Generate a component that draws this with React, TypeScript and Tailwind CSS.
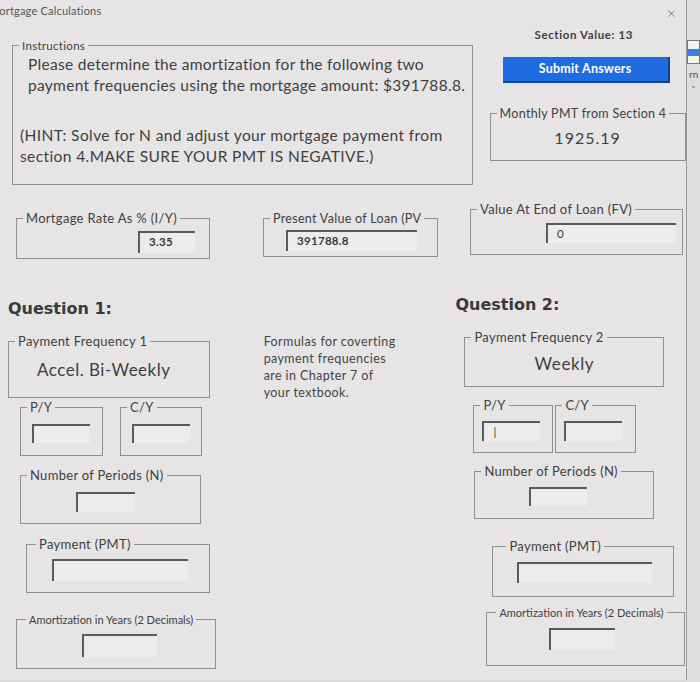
import React from "react";

const font = "font-['Lato','Liberation_Sans',sans-serif]";

type BoxProps = {
  legend: string;
  className?: string;
  legendClass?: string;
  children?: React.ReactNode;
};

const Box = ({ legend, className = "", legendClass = "text-[13px]", children }: BoxProps) => (
  <fieldset className={`border border-[#8f8f8f] ${className}`}>
    <legend className={`ml-[6px] px-[3px] leading-[13px] tracking-[0.3px] text-[#3f3f3f] ${legendClass}`}>{legend}</legend>
    {children}
  </fieldset>
);

const Field = ({ className = "", value = "" }: { className?: string; value?: string }) => (
  <div
    className={`border-t-2 border-l-2 border-[#5a5a5a] bg-[#ececec] text-[11.5px] font-bold tracking-[0.3px] text-[#3a3a3a] pl-[9px] leading-[18px] ${className}`}
  >
    {value}
  </div>
);

export default function App() {
  return (
    <div className={`flex w-[700px] h-[682px] overflow-hidden bg-[#d9d9d9] ${font}`}>
      <div className="relative w-[687px] h-[680px] bg-[#e6e4e4] text-[#3f3f3f] border-r border-[#9a9a9a]">
        <div className="flex items-start h-[28px]">
          <span className="-ml-[11px] mt-[3px] text-[11px] tracking-[0.2px] text-[#555]">Mortgage Calculations</span>
          <span className="ml-auto mr-[10px] mt-[1px] text-[16px] text-[#666] font-light">×</span>
        </div>

        {/* row 1 */}
        <div className="flex items-start">
          <Box legend="Instructions" className="ml-[12px] mt-[11px] w-[462px] h-[146px]" legendClass="text-[11.5px]">
            <p className="pl-[15px] pt-[2px] text-[15.5px] leading-[21px] tracking-[0.3px]">
              Please determine the amortization for the following two
              <br />
              payment frequencies using the mortgage amount: $391788.8.
            </p>
            <p className="pl-[7px] mt-[29px] text-[15.5px] leading-[21px] tracking-[0.4px]">
              (HINT: Solve for N and adjust your mortgage payment from
              <br />
              section 4.MAKE SURE YOUR PMT IS NEGATIVE.)
            </p>
          </Box>
          <div className="ml-[17px] w-[197px] flex flex-col">
            <div className="mt-0 ml-[45px] text-[11.5px] font-bold tracking-[0.6px] leading-[14px]">Section Value: 13</div>
            <button className="ml-[13px] mt-[15px] w-[167px] h-[26px] bg-[#1f6be0] text-white text-[12.5px] font-bold tracking-[0.2px] border-r-2 border-b-2 border-[#10438f]">
              Submit Answers
            </button>
            <Box legend="Monthly PMT from Section 4" className="mt-[24px] w-[196px] h-[54px]" legendClass="text-[12.5px]">
              <div className="text-center text-[16px] tracking-[1px] mt-[6px]">1925.19</div>
            </Box>
          </div>
        </div>

        {/* row 2 */}
        <div className="flex items-start h-[74px]">
          <Box legend="Mortgage Rate As % (I/Y)" className="ml-[16px] mt-[27px] w-[194px] h-[47px]">
            <Field className="ml-[121px] mt-[6px] w-[57px] h-[22px]" value="3.35" />
          </Box>
          <Box legend="Present Value of Loan (PV" className="ml-[53px] mt-[27px] w-[175px] h-[45px]" legendClass="text-[12.5px]">
            <Field className="ml-[22px] mt-[5px] w-[131px] h-[21px]" value="391788.8" />
          </Box>
          <Box legend="Value At End of Loan (FV)" className="ml-[32px] mt-[18px] w-[213px] h-[52px]">
            <Field className="ml-[75px] mt-[7px] w-[130px] h-[20px] font-normal" value="0" />
          </Box>
        </div>

        {/* row 3 */}
        <div className="flex items-start">
          {/* question 1 */}
          <div className="w-[220px] flex flex-col items-start">
            <h2 className="ml-[8px] mt-[40px] h-[20px] leading-[20px] text-[16px] font-bold font-['DejaVu_Sans',sans-serif] text-[#3a3a3a]">
              Question 1:
            </h2>
            <Box legend="Payment Frequency 1" className="ml-[8px] mt-[16px] w-[202px] h-[63px]">
              <div className="ml-[28px] mt-[9px] text-[17px] tracking-[0.5px]">Accel. Bi-Weekly</div>
            </Box>
            <div className="ml-[20px] mt-[3px] flex gap-[17px]">
              <Box legend="P/Y" className="w-[83px] h-[55px]">
                <Field className="ml-[11px] mt-[10px] w-[58px] h-[19px]" />
              </Box>
              <Box legend="C/Y" className="w-[82px] h-[55px]">
                <Field className="ml-[11px] mt-[10px] w-[58px] h-[19px]" />
              </Box>
            </div>
            <Box legend="Number of Periods (N)" className="ml-[20px] mt-[13px] w-[181px] h-[55px]">
              <Field className="ml-[55px] mt-[10px] w-[59px] h-[20px]" />
            </Box>
            <Box legend="Payment (PMT)" className="ml-[26px] mt-[14px] w-[184px] h-[55px]" legendClass="text-[13px] ml-[9px]">
              <Field className="ml-[25px] mt-[8px] w-[136px] h-[22px]" />
            </Box>
            <Box legend="Amortization in Years (2 Decimals)" className="ml-[16px] mt-[20px] w-[200px] h-[56px]" legendClass="text-[11px] tracking-[0px] ml-[9px]">
              <Field className="ml-[65px] mt-[8px] w-[75px] h-[23px]" />
            </Box>
          </div>

          {/* note */}
          <p className="ml-[44px] mt-[74px] w-[150px] text-[12.5px] leading-[17px] tracking-[0.4px] text-[#444]">
            Formulas for coverting
            <br />
            payment frequencies
            <br />
            are in Chapter 7 of
            <br />
            your textbook.
          </p>

          {/* question 2 */}
          <div className="ml-[42px] w-[231px] flex flex-col items-start">
            <h2 className="mt-[36px] h-[20px] leading-[20px] text-[16px] font-bold font-['DejaVu_Sans',sans-serif] text-[#3a3a3a]">
              Question 2:
            </h2>
            <Box legend="Payment Frequency 2" className="ml-[9px] mt-[16px] w-[200px] h-[56px]">
              <div className="text-center mt-[7px] text-[17px] tracking-[0.6px]">Weekly</div>
            </Box>
            <div className="ml-[18px] mt-[12px] flex gap-[2px]">
              <Box legend="P/Y" className="w-[80px] h-[54px]">
                <Field className="ml-[8px] mt-[9px] w-[58px] h-[20px] font-normal" value="|" />
              </Box>
              <Box legend="C/Y" className="w-[81px] h-[54px]">
                <Field className="ml-[8px] mt-[9px] w-[58px] h-[20px]" />
              </Box>
            </div>
            <Box legend="Number of Periods (N)" className="ml-[19px] mt-[12px] w-[180px] h-[54px]">
              <Field className="ml-[54px] mt-[9px] w-[58px] h-[19px]" />
            </Box>
            <Box legend="Payment (PMT)" className="ml-[37px] mt-[21px] w-[182px] h-[57px]" legendClass="text-[13px] ml-[13px]">
              <Field className="ml-[24px] mt-[9px] w-[135px] h-[21px]" />
            </Box>
            <Box legend="Amortization in Years (2 Decimals)" className="ml-[31px] mt-[9px] w-[199px] h-[60px]" legendClass="text-[11px] tracking-[0px] ml-[9px]">
              <Field className="ml-[62px] mt-[9px] w-[66px] h-[22px]" />
            </Box>
          </div>
        </div>
      </div>

      {/* sliver of the window behind */}
      <div className="w-[13px] flex flex-col items-start bg-[#dedede]">
        <div className="mt-[40px] w-full h-[24px] border border-[#777] bg-[#f2f2f2] flex flex-col justify-center">
          <div className="h-[7px] bg-[#3b7fe0]" />
        </div>
        <span className="mt-[4px] ml-[2px] text-[10px] text-[#555] leading-[12px]">rn</span>
        <span className="ml-[3px] text-[8px] text-[#777] leading-[10px]">⌄</span>
      </div>
    </div>
  );
}
